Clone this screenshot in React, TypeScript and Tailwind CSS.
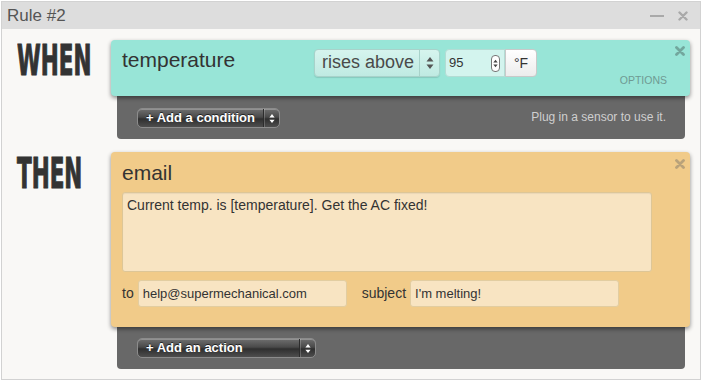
import React from "react";

const Cross = ({ className, sw = 2.4 }: { className?: string; sw?: number }) => (
  <svg viewBox="0 0 10 10" className={className}>
    <path d="M1.5 1.5 L8.5 8.5 M8.5 1.5 L1.5 8.5" stroke="currentColor" strokeWidth={sw} strokeLinecap="round" />
  </svg>
);

const Arrows = ({ className, w = 8, h = 14 }: { className?: string; w?: number; h?: number }) => (
  <svg width={w} height={h} viewBox="0 0 8 14" className={className}>
    <path d="M4 1 L7.5 5.5 L0.5 5.5 Z M4 13 L7.5 8.5 L0.5 8.5 Z" fill="currentColor" />
  </svg>
);

const Big = ({ children }: { children: React.ReactNode }) => (
  <span
    className="block origin-left scale-x-[0.5] whitespace-nowrap text-[43px] leading-[36px] font-bold text-[#333] [-webkit-text-stroke:1.2px_#333]"
    style={{ fontFamily: '"DejaVu Sans", sans-serif' }}
  >
    {children}
  </span>
);

const DarkButton = ({ label, width }: { label: string; width: string }) => (
  <div
    className={`${width} h-[20px] flex rounded-[5px] border border-[#8c8c8c] bg-[linear-gradient(#6e6e6e,#4a4a4a_45%,#2f2f2f_55%,#4e4e4e)] shadow-[inset_0_1px_0_rgba(255,255,255,0.25)]`}
  >
    <div className="flex-1 pl-[8px] text-[13px] leading-[18px] font-bold text-white [text-shadow:0_-1px_0_rgba(0,0,0,0.6)]">
      {label}
    </div>
    <div className="w-[16px] border-l border-[#2c2c2c] shadow-[inset_1px_0_0_rgba(255,255,255,0.2)] flex items-center justify-center text-white">
      <Arrows w={6} h={11} />
    </div>
  </div>
);

export default function App() {
  return (
    <div
      className="w-[703px] h-[381px] bg-white pt-[1px] pl-[1px]"
      style={{ fontFamily: '"Liberation Sans", Arial, sans-serif' }}
    >
      <div className="w-[700px] h-[379px] border border-[#d2d2d2] bg-[#f9f8f6] flex flex-col">
        <div className="h-[27px] bg-[#dddddd] flex items-center pl-[5px] pr-[12px]">
          <span className="text-[17px] text-[#555] leading-[20px]">Rule #2</span>
          <div className="flex-1" />
          <div className="w-[14px] h-[2px] bg-[#a9a9a9]" />
          <Cross className="ml-[14px] w-[10px] h-[10px] text-[#a9a9a9]" />
        </div>

        <div className="flex flex-col pt-[11px]">
          {/* WHEN row */}
          <div className="flex">
            <div className="w-[109px] pl-[15px] pt-[2px]">
              <Big>WHEN</Big>
            </div>
            <div className="w-[579px] flex flex-col">
              <div className="relative z-10 h-[56px] rounded-[4px] bg-[#98e5d7] shadow-[0_2px_4px_rgba(0,0,0,0.45)] flex items-start pl-[11px] pr-[23px] pt-[8px]">
                <div className="w-[192px] text-[21px] leading-[24px] text-[#333]">temperature</div>
                <div className="mt-[1px] w-[126px] h-[28px] rounded-[4px] border border-[#a8d2ca] bg-[linear-gradient(#d6f4ee,#bfeae2)] shadow-[0_1px_1px_rgba(0,0,0,0.12)] flex">
                  <div className="flex-1 pl-[7px] text-[18px] leading-[25px] text-[#4a4a4a]">rises above</div>
                  <div className="w-[20px] border-l border-[#a8d2ca] flex items-center justify-center text-[#555]">
                    <Arrows w={8} h={14} />
                  </div>
                </div>
                <div className="mt-[1px] ml-[5px] w-[60px] h-[28px] rounded-l-[4px] border border-[#b3dcd4] bg-[#d3f4ee] flex items-center pl-[3px] pr-[4px]">
                  <span className="flex-1 text-[13px] text-[#333]">95</span>
                  <div className="w-[9px] h-[17px] rounded-[4px] border border-[#777] bg-white flex items-center justify-center text-[#444]">
                    <Arrows w={5} h={11} />
                  </div>
                </div>
                <div className="mt-[1px] w-[32px] h-[28px] rounded-r-[4px] border border-[#c9c9c9] bg-[linear-gradient(#ffffff,#ececec)] flex items-center justify-center text-[14px] text-[#333]">
                  °F
                </div>
                <div className="ml-auto self-end mb-[10px] text-[10.5px] leading-[12px] text-[#6f9a93]">OPTIONS</div>
                <Cross sw={2.8} className="absolute top-[6px] right-[5px] w-[10px] h-[10px] text-[#72a79d]" />
              </div>
              <div className="ml-[6px] mr-[5px] h-[43px] rounded-b-[4px] bg-[#686868] flex items-start justify-between pl-[20px] pr-[19px] pt-[12px]">
                <DarkButton label="+ Add a condition" width="w-[143px]" />
                <span className="text-[12px] leading-[16px] mt-[1px] text-[#cfcfcf]">Plug in a sensor to use it.</span>
              </div>
            </div>
          </div>

          {/* THEN row */}
          <div className="flex mt-[13px]">
            <div className="w-[109px] pl-[15px] pt-[3px]">
              <Big>THEN</Big>
            </div>
            <div className="w-[579px] flex flex-col">
              <div className="relative z-10 h-[175px] rounded-[4px] bg-[#f1cb89] shadow-[0_2px_4px_rgba(0,0,0,0.45)] flex flex-col pl-[11px] pt-[9px]">
                <div className="text-[21px] leading-[24px] text-[#333]">email</div>
                <div className="mt-[7px] w-[530px] h-[80px] rounded-[3px] border border-[#ddc697] bg-[#f8e4c2] shadow-[inset_0_1px_1px_rgba(0,0,0,0.06)] px-[4px] pt-[3px] text-[14px] leading-[18px] text-[#333]">
                  Current temp. is [temperature]. Get the AC fixed!
                </div>
                <div className="mt-[8px] flex items-center h-[27px] text-[14px] text-[#333]">
                  <span>to</span>
                  <div className="ml-[4px] w-[209px] h-[27px] rounded-[3px] border border-[#e2cda1] bg-[#f8e4c2] flex items-center pl-[4px] text-[13px] text-[#333]">
                    help@supermechanical.com
                  </div>
                  <span className="ml-[15px]">subject</span>
                  <div className="ml-[4px] w-[209px] h-[27px] rounded-[3px] border border-[#e2cda1] bg-[#f8e4c2] flex items-center pl-[4px] text-[13px] text-[#333]">
                    I'm melting!
                  </div>
                </div>
                <Cross sw={2.8} className="absolute top-[7px] right-[5px] w-[10px] h-[10px] text-[#b9a27a]" />
              </div>
              <div className="ml-[6px] mr-[5px] h-[42px] rounded-b-[4px] bg-[#686868] pl-[20px] pt-[11px]">
                <DarkButton label="+ Add an action" width="w-[179px]" />
              </div>
            </div>
          </div>
        </div>
      </div>
    </div>
  );
}
